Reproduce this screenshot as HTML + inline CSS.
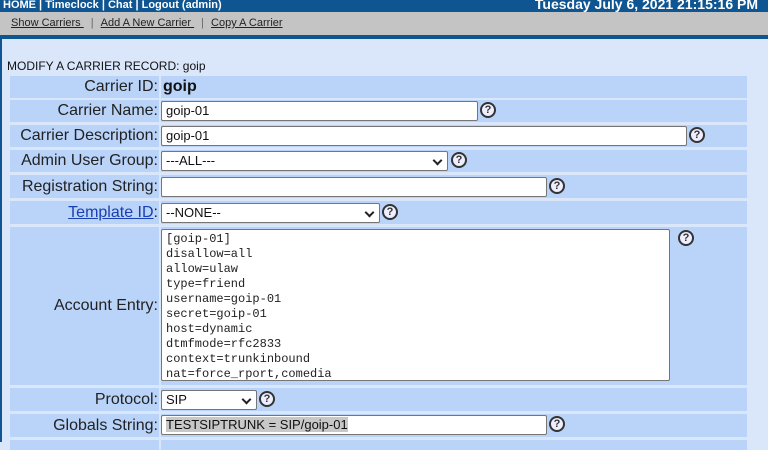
<!DOCTYPE html>
<html><head><meta charset="utf-8"><style>
*{box-sizing:border-box;margin:0;padding:0}
body{width:768px;height:442px;overflow:hidden;background:#dae7fb;font-family:"Liberation Sans",Arial,sans-serif;position:relative}
.top{position:absolute;left:0;top:0;width:768px;height:12px;background:#0e5592;color:#fff;font-weight:bold;font-size:11px;line-height:10px;padding-left:3px}
.date{position:absolute;right:10px;top:-3px;font-size:14px;line-height:14px}
.nav{position:absolute;left:0;top:12px;width:768px;height:23px;background:#c4c4c4;font-size:11px;line-height:23px;padding-left:11px;color:#222}
.nav a{color:#222;text-decoration:underline}
.nav span{color:#666;margin:0 7px}
.bl{position:absolute;left:0;top:35px;width:768px;height:4px;background:#0e5592}
.lb{position:absolute;left:0;top:39px;width:2px;height:403px;background:#0e5592}
.title{position:absolute;left:7px;top:59px;font-size:12px;color:#111}
.row{position:absolute;left:10px;width:737px;background:#b9d3f9}
.lab{position:absolute;left:0;width:148px;text-align:right;font-size:16px;color:#222;top:50%;transform:translateY(-50%);line-height:18px}
.lab a{color:#1a3fb0}
.sep{position:absolute;left:149px;top:0;bottom:0;width:2px;background:#dae7fb}
.inp{position:absolute;height:20px;background:#fff;border:1px solid #767676;border-radius:2px;font-size:13px;line-height:18px;padding-left:4px;color:#111}
.sel:after{content:"";position:absolute;right:6px;top:5px;width:5px;height:5px;border-right:2px solid #222;border-bottom:2px solid #222;transform:rotate(45deg)}
.q{position:absolute;width:16px;height:16px;border:2px solid #333;border-radius:50%;font-size:11px;font-weight:bold;text-align:center;line-height:12px;color:#333;background:#eef}
.ta{position:absolute;left:161px;top:229px;width:509px;height:152px;background:#fff;border:1px solid #767676;border-radius:2px;font-family:"Liberation Mono",monospace;font-size:12px;line-height:15px;padding:2px 4px;color:#222;white-space:pre}
</style></head><body>
<div class="top">HOME | Timeclock | Chat | Logout (admin)<span class="date">Tuesday July 6, 2021 21:15:16 PM</span></div>
<div class="nav"><a>Show Carriers </a><span>|</span><a>Add A New Carrier </a><span>|</span><a>Copy A Carrier</a></div>
<div class="bl"></div><div class="lb"></div>
<div class="title">MODIFY A CARRIER RECORD: goip</div>

<div class="row" style="top:76px;height:22px"><div class="lab">Carrier ID:</div><div class="sep"></div><b style="position:absolute;left:153px;top:2px;font-size:16px;color:#111">goip</b></div>
<div class="row" style="top:100px;height:22px"><div class="lab">Carrier Name:</div><div class="sep"></div></div>
<div class="row" style="top:125px;height:22px"><div class="lab">Carrier Description:</div><div class="sep"></div></div>
<div class="row" style="top:150px;height:22px"><div class="lab">Admin User Group:</div><div class="sep"></div></div>
<div class="row" style="top:175px;height:23px"><div class="lab">Registration String:</div><div class="sep"></div></div>
<div class="row" style="top:201px;height:23px"><div class="lab"><a><u>Template ID</u></a>:</div><div class="sep"></div></div>
<div class="row" style="top:227px;height:158px"><div class="lab">Account Entry:</div><div class="sep"></div></div>
<div class="row" style="top:388px;height:23px"><div class="lab">Protocol:</div><div class="sep"></div></div>
<div class="row" style="top:414px;height:23px"><div class="lab">Globals String:</div><div class="sep"></div></div>
<div class="row" style="top:440px;height:10px"><div class="sep"></div></div>

<div class="inp" style="left:161px;top:101px;width:317px">goip-01</div><div class="q" style="left:480px;top:102px">?</div>
<div class="inp" style="left:161px;top:126px;width:526px">goip-01</div><div class="q" style="left:689px;top:127px">?</div>
<div class="inp sel" style="left:161px;top:151px;width:287px">---ALL---</div><div class="q" style="left:451px;top:152px">?</div>
<div class="inp" style="left:161px;top:177px;width:386px"></div><div class="q" style="left:549px;top:178px">?</div>
<div class="inp sel" style="left:161px;top:203px;width:219px">--NONE--</div><div class="q" style="left:382px;top:204px">?</div>
<div class="ta">[goip-01]
disallow=all
allow=ulaw
type=friend
username=goip-01
secret=goip-01
host=dynamic
dtmfmode=rfc2833
context=trunkinbound
nat=force_rport,comedia</div><div class="q" style="left:678px;top:230px">?</div>
<div class="inp sel" style="left:161px;top:390px;width:96px">SIP</div><div class="q" style="left:259px;top:391px">?</div>
<div class="inp" style="left:161px;top:415px;width:386px;background:#fff"><span style="background:#c8c8c8">TESTSIPTRUNK = SIP/goip-01</span></div><div class="q" style="left:549px;top:416px">?</div>
</body></html>
